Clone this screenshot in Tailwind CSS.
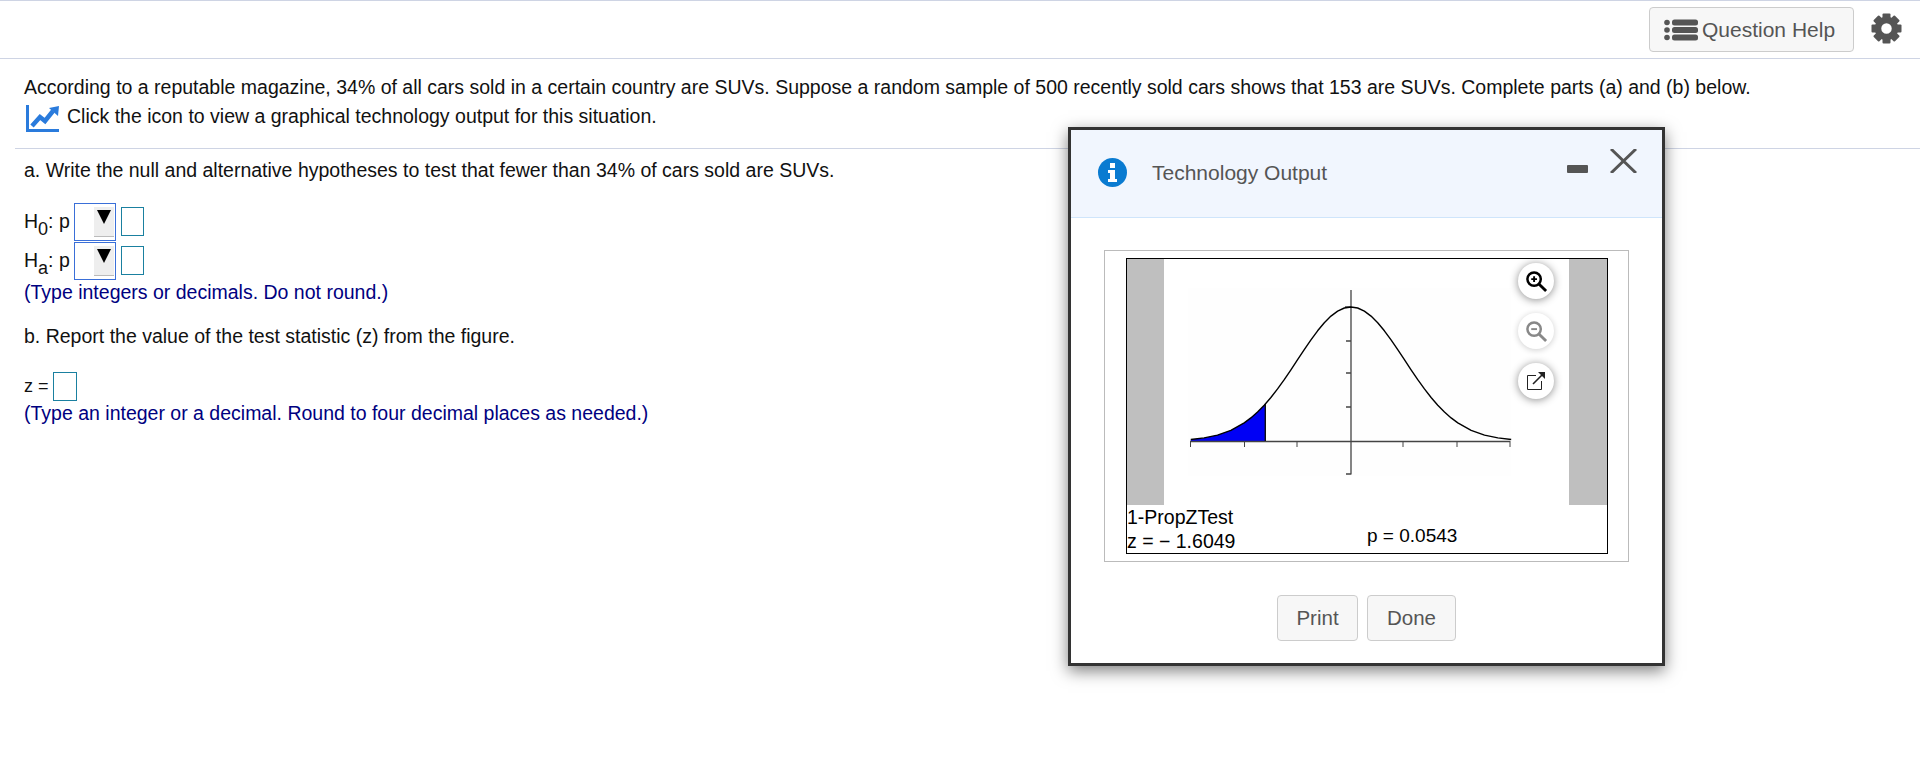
<!DOCTYPE html>
<html lang="en">
<head>
    <meta charset="UTF-8">
    <title>Technology Output</title>
    <script src="https://cdn.jsdelivr.net/npm/@tailwindcss/browser@4"></script>
</head>
<body class="bg-white h-screen relative overflow-hidden font-['Liberation_Sans',Arial,sans-serif] text-[19.5px] text-[#111]">

    <!-- top bar -->
    <div class="h-[59px] border-t border-b border-[#ced4e4] flex items-start justify-end">
        <button class="mt-[6px] w-[205px] h-[45px] flex items-center pl-[14px] gap-1 bg-[#f7f7f7] border border-[#ccc] rounded text-[#555] text-[21px]">
            <svg width="34" height="22" viewBox="0 0 34 22" fill="#555">
                <circle cx="3" cy="3.5" r="2.8"/><circle cx="3" cy="11" r="2.8"/><circle cx="3" cy="18.5" r="2.8"/>
                <rect x="8" y="0.5" width="26" height="6" rx="2.5"/><rect x="8" y="8" width="26" height="6" rx="2.5"/><rect x="8" y="15.5" width="26" height="6" rx="2.5"/>
            </svg>
            <span>Question Help</span>
        </button>
        <svg class="mt-[12px] ml-[17px] mr-[18px]" width="31" height="31" viewBox="0 0 31 31" fill="#555">
            <circle cx="15.5" cy="15.5" r="8.5" fill="none" stroke="#555" stroke-width="6.5"/>
            <rect x="11.5" y="0.5" width="8" height="6" rx="1"/>
            <rect x="11.5" y="24.5" width="8" height="6" rx="1"/>
            <rect x="0.5" y="11.5" width="6" height="8" rx="1"/>
            <rect x="24.5" y="11.5" width="6" height="8" rx="1"/>
            <rect x="11.5" y="0.5" width="8" height="6" rx="1" transform="rotate(45 15.5 15.5)"/>
            <rect x="11.5" y="24.5" width="8" height="6" rx="1" transform="rotate(45 15.5 15.5)"/>
            <rect x="0.5" y="11.5" width="6" height="8" rx="1" transform="rotate(45 15.5 15.5)"/>
            <rect x="24.5" y="11.5" width="6" height="8" rx="1" transform="rotate(45 15.5 15.5)"/>
        </svg>
    </div>

    <!-- question -->
    <div class="pl-6 pt-[14px] h-[89px]">
        <p class="h-[29px] leading-[29px] whitespace-nowrap">According to a reputable magazine, 34% of all cars sold in a certain country are SUVs. Suppose a random sample of 500 recently sold cars shows that 153 are SUVs. Complete parts (a) and (b) below.</p>
        <div class="h-[29px] leading-[29px] flex items-center">
            <svg class="ml-[2px] mr-2 mt-[3px]" width="33" height="27" viewBox="0 0 33 27">
                <path d="M0 0h3v24h30v3H0z" fill="#2a7bdc"/>
                <path d="M6 21l8-9 5 4 8-10" fill="none" stroke="#2a7bdc" stroke-width="4.5"/>
                <path d="M23 3l10-2-1 10z" fill="#2a7bdc"/>
            </svg>
            <span>Click the icon to view a graphical technology output for this situation.</span>
        </div>
    </div>
    <div class="ml-[15px] border-t border-[#ced4e4]"></div>

    <div class="pl-6">
        <p class="h-[42px] leading-[42px]">a. Write the null and alternative hypotheses to test that fewer than 34% of cars sold are SUVs.</p>

        <div class="mt-[11px] flex items-center h-[39px]">
            <span class="w-[50px] whitespace-nowrap">H<sub class="text-[18px] leading-none top-[7px]">0</sub>: p</span>
            <div class="w-[42px] h-[38px] border border-[#3a6fd8] flex justify-end items-center pr-px">
                <div class="w-5 h-[30px] bg-[#eee] border-b border-[#bbb] flex justify-center pt-[3px]">
                    <div class="w-0 h-0 border-l-[7px] border-r-[7px] border-t-[14px] border-l-transparent border-r-transparent border-t-black"></div>
                </div>
            </div>
            <div class="ml-[5px] w-[23px] h-[29px] border border-[#1a80a0]"></div>
        </div>
        <div class="flex items-center h-[39px]">
            <span class="w-[50px] whitespace-nowrap">H<sub class="text-[18px] leading-none top-[7px]">a</sub>: p</span>
            <div class="w-[42px] h-[38px] border border-[#3a6fd8] flex justify-end items-center pr-px">
                <div class="w-5 h-[30px] bg-[#eee] border-b border-[#bbb] flex justify-center pt-[3px]">
                    <div class="w-0 h-0 border-l-[7px] border-r-[7px] border-t-[14px] border-l-transparent border-r-transparent border-t-black"></div>
                </div>
            </div>
            <div class="ml-[5px] w-[23px] h-[29px] border border-[#1a80a0]"></div>
        </div>
        <p class="h-6 leading-6 text-[#000080]">(Type integers or decimals. Do not round.)</p>

        <p class="mt-[18px] h-[28px] leading-[28px]">b. Report the value of the test statistic (z) from the figure.</p>

        <div class="mt-[21px] flex items-center h-[30px]">
            <span class="w-[29px] text-[18px]">z =</span>
            <div class="w-6 h-[29px] border border-[#1a80a0]"></div>
        </div>
        <p class="-mt-[2px] h-[28px] leading-[28px] text-[#000080]">(Type an integer or a decimal. Round to four decimal places as needed.)</p>
    </div>

    <!-- technology output dialog -->
    <div class="absolute left-[1068px] top-[127px] w-[597px] h-[539px] bg-white border-[3px] border-[#333] shadow-[0_5px_15px_rgba(0,0,0,0.5)]">
        <div class="h-[88px] bg-[#f1f6fe] border-b border-[#cfe5fb] relative flex items-center pl-[27px] pb-[2px] text-[#555]">
            <svg width="29" height="29" viewBox="0 0 29 29">
                <circle cx="14.5" cy="14.5" r="14.5" fill="#0a7bd1"/>
                <rect x="12" y="5" width="5" height="5" fill="#fff"/>
                <path d="M10 12h7v9h2v3H10v-3h2v-6h-2z" fill="#fff"/>
            </svg>
            <span class="ml-[25px] text-[21px]">Technology Output</span>
            <div class="absolute left-[496px] top-[35px] w-[21px] h-2 rounded-[1px] bg-[#555]"></div>
            <svg class="absolute left-[539px] top-[19px]" width="27" height="24" viewBox="0 0 27 24">
                <path d="M1 0l25 24M26 0L1 24" stroke="#555" stroke-width="3" fill="none"/>
            </svg>
        </div>

        <div class="mt-[32px] ml-[33px] w-[525px] h-[312px] border border-[#bbb] pt-[7px] pl-[21px]">
            <div class="relative w-[482px] h-[296px] border border-black overflow-hidden text-[19.5px] leading-[24px] text-black">
                <svg class="absolute left-0 top-0" width="480" height="294" viewBox="1127 259 480 294">
                    <rect x="1127" y="259" width="37" height="246" fill="#bfbfbf"/>
                    <rect x="1569" y="259" width="38" height="246" fill="#bfbfbf"/>
                    <rect x="1188" y="288" width="323" height="188" fill="#fefefe"/>
                    <path d="M1190.8 439.5L1204.15 437.9 1217.5 435.1 1230.85 430.3 1244.2 422.9 1257.55 412 1265.3 404V441H1190.8z" fill="#0000f5"/>
                    <path d="M1190 441.5H1510M1351 290V474.5M1345 307H1351M1346 341H1351M1346 373H1351M1346 407H1351M1346 474H1351" stroke="#444" stroke-width="1.3" fill="none"/>
                    <path d="M1190.5 441V447M1244.5 441V447M1297 441V447M1403 441V447M1457 441V447M1510 441V447" stroke="#444" stroke-width="1" fill="none"/>
                    <path d="M1265.3 404V441" stroke="#111" stroke-width="1.4"/>
                    <polyline fill="none" stroke="#000" stroke-width="1.4" stroke-linejoin="round" points="1190.8,439.5 1204.15,437.9 1217.5,435.1 1230.85,430.3 1244.2,422.9 1250.87,417.9 1257.55,412 1264.22,405.2 1270.9,397.5 1277.57,388.9 1284.25,379.7 1290.92,369.8 1297.6,359.7 1304.27,349.6 1310.95,339.9 1317.62,330.8 1324.3,322.7 1330.97,316.1 1337.65,311.1 1344.32,308 1351,307 1357.68,308 1364.35,311.1 1371.03,316.1 1377.7,322.7 1384.38,330.8 1391.05,339.9 1397.73,349.6 1404.4,359.7 1411.08,369.8 1417.75,379.7 1424.43,388.9 1431.1,397.5 1437.78,405.2 1444.45,412 1451.13,417.9 1457.8,422.9 1471.15,430.3 1484.5,435.1 1497.85,437.9 1511.2,439.5"/>
                </svg>

                <div class="absolute left-0 top-[246px] whitespace-nowrap">1-PropZTest</div>
                <div class="absolute left-0 top-[270px] whitespace-nowrap">z = &minus; 1.6049</div>
                <div class="absolute left-[240px] top-[265px] whitespace-nowrap text-[19px]">p = 0.0543</div>

                <button class="absolute left-[391px] top-[4px] w-9 h-9 rounded-full bg-white shadow-[0_1px_8px_rgba(0,0,0,0.45)] flex items-center justify-center">
                    <svg width="23" height="23" viewBox="0 0 24 24" fill="none" stroke="#000">
                        <circle cx="9.5" cy="9.5" r="7" stroke-width="2.6"/>
                        <path d="M14.5 14.5L22 22" stroke-width="3"/>
                        <path d="M6.5 9.5h6M9.5 6.5v6" stroke-width="2"/>
                    </svg>
                </button>
                <button class="absolute left-[391px] top-[54px] w-9 h-9 rounded-full bg-white shadow-[0_1px_6px_rgba(0,0,0,0.2)] flex items-center justify-center">
                    <svg width="23" height="23" viewBox="0 0 24 24" fill="none" stroke="#888">
                        <circle cx="9.5" cy="9.5" r="7" stroke-width="2.6"/>
                        <path d="M14.5 14.5L22 22" stroke-width="3"/>
                        <path d="M6.5 9.5h6" stroke-width="2"/>
                    </svg>
                </button>
                <button class="absolute left-[391px] top-[104px] w-9 h-9 rounded-full bg-white shadow-[0_1px_8px_rgba(0,0,0,0.45)] flex items-center justify-center">
                    <svg width="18" height="18" viewBox="0 0 18 18" fill="none" stroke="#222">
                        <path d="M9 3.5H.5v14h14V9" stroke-width="1"/>
                        <path d="M6 12L15 3" stroke-width="1.6"/>
                        <path d="M11 0h7v7z" fill="#222" stroke="none"/>
                    </svg>
                </button>
            </div>
        </div>

        <div class="mt-[33px] ml-[206px] flex gap-[9px] text-[#555] text-[20.5px]">
            <button class="w-[81px] h-[46px] bg-[#f7f7f7] border border-[#ccc] rounded">Print</button>
            <button class="w-[89px] h-[46px] bg-[#f7f7f7] border border-[#ccc] rounded">Done</button>
        </div>
    </div>
</body>
</html>
